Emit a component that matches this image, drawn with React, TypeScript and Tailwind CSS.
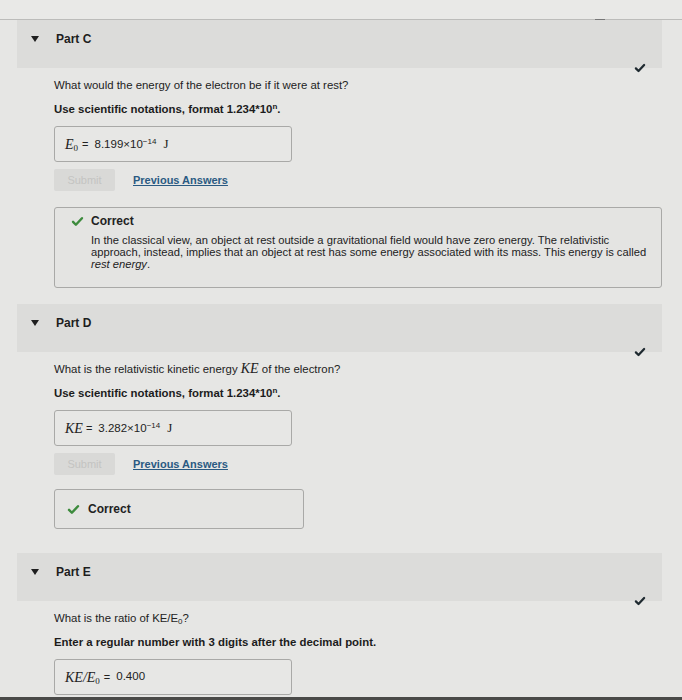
import React from 'react';

type PartProps = {
  label: string;
  children: React.ReactNode;
};

const Tick = ({ className }: { className?: string }) => (
  <svg viewBox="0 0 16 16" className={className} fill="none" stroke="currentColor" strokeWidth={3} strokeLinecap="round" strokeLinejoin="round">
    <path d="M2.5 8.5l3.5 3.5 7.5-8" />
  </svg>
);

const Part = ({ label, children }: PartProps) => (
  <section>
    <div className="flex h-[48px] items-start bg-[#dcdcda] pl-[14px] pr-[16px] pt-[12px]">
      <span className="mt-[4px] h-0 w-0 border-x-[4px] border-t-[6px] border-x-transparent border-t-[#1f1f1f]" />
      <span className="ml-[17px] text-[12px] font-bold leading-[14px] text-[#1e1e1e]">{label}</span>
      <Tick className="mb-[-6px] ml-auto h-[12px] w-[12px] self-end text-[#1f2a30]" />
    </div>
    <div className="pl-[37px] pt-[9px]">{children}</div>
  </section>
);

const Question = ({ text, rule }: { text: React.ReactNode; rule: React.ReactNode }) => (
  <>
    <p className="text-[11.4px] leading-[16px] text-[#222]">{text}</p>
    <p className="mt-[8px] text-[11.4px] font-bold leading-[16px] text-[#1c1c1c]">{rule}</p>
  </>
);

const Answer = ({ children }: { children: React.ReactNode }) => (
  <div className="mt-[9px] flex h-[36px] w-[238px] items-center rounded-[3px] border border-[#a9a9a7] bg-[#e7e7e5] pl-[10px] text-[#222]">
    {children}
  </div>
);

const Actions = () => (
  <div className="mt-[7px] flex items-center">
    <button className="h-[22px] w-[61px] rounded-[2px] bg-[#d9d9d7] text-[11px] text-[#c4c4c2]">Submit</button>
    <a href="#" className="ml-[18px] text-[11px] font-bold text-[#2a5a82] underline">Previous Answers</a>
  </div>
);

const Sci = ({ mant, exp }: { mant: string; exp: string }) => (
  <span className="ml-[6px] text-[11.5px]">
    {mant}×10<sup className="text-[8px]">{exp}</sup>
    <span className="ml-[7px] font-['Liberation_Serif',serif] text-[13px]">J</span>
  </span>
);

const sciRule = (
  <>
    Use scientific notations, format 1.234*10<sup className="text-[8px]">n</sup>.
  </>
);

export default function App() {
  return (
    <div className="flex h-[700px] w-[682px] flex-col overflow-hidden bg-[#e6e6e4] font-['Liberation_Sans',Arial,sans-serif]">
      <div className="flex h-[20px] items-end border-b border-[#bcbcba] bg-[#e9e9e7] pr-[36px]">
        <div className="ml-auto mb-[-3px] flex items-center gap-[3px]">
          <span className="h-px w-[10px] bg-[#777]" />
          <span className="w-[38px] border-b border-dotted border-[#555] text-[4px] leading-[4px] text-[#666]">&nbsp;</span>
        </div>
      </div>

      <div className="ml-[17px] w-[645px]">
        <Part label="Part C">
          <Question text="What would the energy of the electron be if it were at rest?" rule={sciRule} />
          <Answer>
            <span className="font-['Liberation_Serif',serif] text-[14px] italic">E<sub className="text-[9px] not-italic">0</sub></span>
            <span className="ml-[4px] text-[11px]">=</span>
            <Sci mant="8.199" exp="−14" />
          </Answer>
          <Actions />
          <div className="mt-[16px] flex h-[81px] rounded-[3px] border border-[#a9a9a7] bg-[#e4e4e2] pl-[16px] pr-[10px] pt-[6px]">
            <Tick className="mt-[1px] h-[13px] w-[13px] shrink-0 text-[#3d8b3d]" />
            <div className="ml-[7px] text-[11.2px] leading-[12px] text-[#222]">
              <p className="mb-[6px] text-[12px] font-bold leading-[14px]">Correct</p>
              <p>
                In the classical view, an object at rest outside a gravitational field would have zero energy. The relativistic approach, instead, implies that an object at rest has some energy associated with its mass. This energy is called <i>rest energy</i>.
              </p>
            </div>
          </div>
        </Part>

        <div className="mt-[16px]">
          <Part label="Part D">
            <Question
              text={
                <>
                  What is the relativistic kinetic energy <i className="font-['Liberation_Serif',serif] text-[14px]">KE</i> of the electron?
                </>
              }
              rule={sciRule}
            />
            <Answer>
              <span className="font-['Liberation_Serif',serif] text-[14px] italic">KE</span>
              <span className="ml-[3px] text-[11px]">=</span>
              <Sci mant="3.282" exp="−14" />
            </Answer>
            <Actions />
            <div className="mt-[14px] flex h-[40px] w-[250px] items-center rounded-[3px] border border-[#a9a9a7] bg-[#e4e4e2] pl-[12px]">
              <Tick className="h-[13px] w-[13px] text-[#3d8b3d]" />
              <span className="ml-[8px] text-[12px] font-bold text-[#222]">Correct</span>
            </div>
          </Part>
        </div>

        <div className="mt-[24px]">
          <Part label="Part E">
            <Question
              text={
                <>
                  What is the ratio of KE/E<sub className="text-[8px]">0</sub>?
                </>
              }
              rule="Enter a regular number with 3 digits after the decimal point."
            />
            <Answer>
              <span className="font-['Liberation_Serif',serif] text-[14px] italic">
                KE/E<sub className="text-[9px] not-italic">0</sub>
              </span>
              <span className="ml-[4px] text-[11px]">=</span>
              <span className="ml-[6px] text-[11.5px]">0.400</span>
            </Answer>
          </Part>
        </div>
      </div>

      <div className="mt-auto h-[3px] bg-[#4a4a48]" />
    </div>
  );
}
